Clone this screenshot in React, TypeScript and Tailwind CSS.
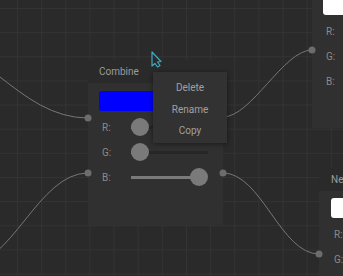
import React from 'react';

type Row = { label: string; value: number };

const Slider: React.FC<{ value: number }> = ({ value }) => {
  // track 77px, thumb 18px -> thumb centre moves from 9 to 68
  const left = 9 + value * 59;
  return (
    <div className="relative w-[77px] h-[3px] bg-[#262626]">
      <div className="absolute left-0 top-0 h-[3px] bg-[#7a7a7a]" style={{ width: left }} />
      <div
        className="absolute top-[-7.5px] w-[18px] h-[18px] rounded-full bg-[#7a7a7a]"
        style={{ left: left - 9 }}
      />
    </div>
  );
};

const NodeRows: React.FC<{ rows: Row[]; sliders?: boolean }> = ({ rows, sliders }) => (
  <div className="mt-[3.5px] flex flex-col">
    {rows.map((r) => (
      <div key={r.label} className="h-[25px] flex items-center">
        <span className="w-[32px] pl-[3px] text-[10px] text-[#8a8a8a]">{r.label}</span>
        {sliders && <Slider value={r.value} />}
      </div>
    ))}
  </div>
);

const curve = (x1: number, y1: number, x2: number, y2: number, k = 0.4) => {
  const d = Math.abs(x2 - x1) * k;
  return `M${x1} ${y1} C${x1 + d} ${y1}, ${x2 - d} ${y2}, ${x2} ${y2}`;
};

const sockets = [
  [88, 118],
  [88, 173],
  [223, 117],
  [223, 173],
  [312, 50],
  [319, 254],
];

export default function App() {
  const rgb: Row[] = [
    { label: 'R:', value: 0 },
    { label: 'G:', value: 0 },
    { label: 'B:', value: 1 },
  ];

  return (
    <div
      className="relative w-[343px] h-[276px] overflow-hidden bg-[#2a2a2a] bg-[linear-gradient(to_right,#333333_1px,transparent_1px),linear-gradient(to_bottom,#333333_1px,transparent_1px)] bg-[size:24.15px_24.15px] bg-[position:17px_8px]"
      style={{ fontFamily: 'Roboto, "Liberation Sans", sans-serif' }}
    >
      {/* links */}
      <svg className="absolute inset-0" width={343} height={276} fill="none" stroke="#767676" strokeWidth={1}>
        <path d={curve(-88, 36, 88, 118)} />
        <path d={curve(-38, 267, 88, 173)} />
        <path d={curve(223, 117, 312, 50, 0.32)} />
        <path d={curve(223, 173, 319, 254)} />
      </svg>

      {/* Combine node */}
      <div className="absolute left-[88px] top-[60px] w-[135px] h-[165px] bg-[#303030] flex flex-col">
        <div className="h-[23px] shrink-0 bg-[#2a2a2a] pl-[11px] flex items-center text-[10px] text-[#9a9a9a]">
          Combine
        </div>
        <div className="pl-[11px] pt-[8px]">
          <div className="w-[109px] h-[20px] rounded-[3px] bg-[#0000ff]" />
          <NodeRows rows={rgb} sliders />
        </div>
      </div>

      {/* top right node */}
      <div className="absolute left-[312px] top-[-36px] w-[80px] h-[164px] bg-[#303030] flex flex-col">
        <div className="h-[23px] shrink-0 bg-[#2a2a2a]" />
        <div className="pl-[11px] pt-[8px]">
          <div className="w-[60px] h-[20px] rounded-[3px] bg-white" />
          <NodeRows rows={rgb} />
        </div>
      </div>

      {/* bottom right node */}
      <div className="absolute left-[319px] top-[168px] w-[80px] h-[140px] bg-[#303030] flex flex-col">
        <div className="h-[23px] shrink-0 bg-[#2a2a2a] pl-[12px] flex items-center text-[10px] text-[#9a9a9a] whitespace-nowrap">
          New Color
        </div>
        <div className="pl-[12px] pt-[7px]">
          <div className="w-[60px] h-[20px] rounded-[3px] bg-white" />
          <NodeRows rows={rgb} />
        </div>
      </div>

      {/* sockets */}
      <svg className="absolute inset-0" width={343} height={276}>
        {sockets.map(([x, y]) => (
          <circle key={`${x}-${y}`} cx={x} cy={y} r={3.5} fill="#6c6c6c" />
        ))}
      </svg>

      {/* context menu */}
      <div className="absolute left-[153px] top-[72px] w-[74px] h-[71px] bg-[#323232] shadow-[0_1px_5px_rgba(0,0,0,0.45)] pt-[5px] flex flex-col">
        {['Delete', 'Rename', 'Copy'].map((item) => (
          <div key={item} className="h-[21.5px] flex items-center justify-center text-[10px] text-[#a0a0a0]">
            {item}
          </div>
        ))}
      </div>

      {/* pointer */}
      <svg className="absolute left-[149px] top-[50px]" width={14} height={19} viewBox="0 0 14 19">
        <path d="M3 2 L3 16 L6 13.5 L8.5 17 L11 15.5 L8.5 12 L12 11.5 Z" fill="#2a2a2a" stroke="#3fa9c4" strokeWidth={1.2} strokeLinejoin="round" />
      </svg>
    </div>
  );
}
